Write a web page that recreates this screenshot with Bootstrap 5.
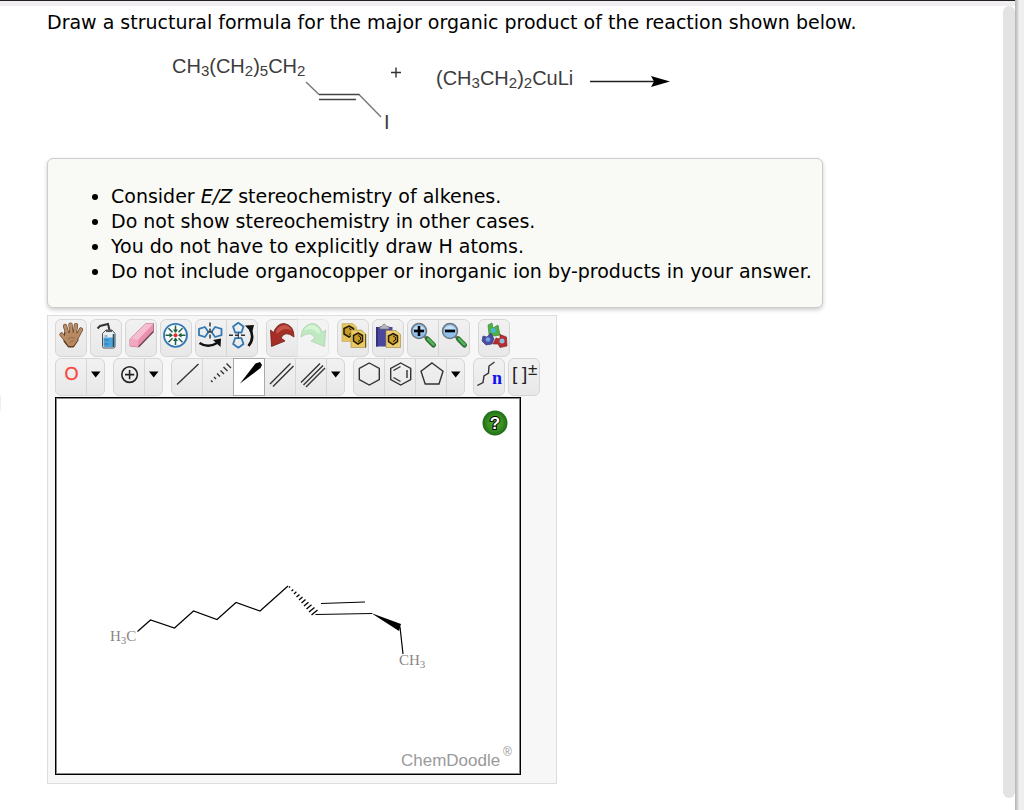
<!DOCTYPE html>
<html lang="en">
<head>
<meta charset="utf-8">
<meta name="viewport" content="width=device-width, initial-scale=1">
<title>Organic product question</title>
<link rel="stylesheet" href="https://cdn.jsdelivr.net/npm/bootstrap@5.3.0/dist/css/bootstrap.min.css">
<style>
body{font-family:"DejaVu Sans",Verdana,sans-serif;font-size:19px;line-height:25px;color:#000;background:#fff}
.top-edge{height:6px;background:#f0eef0;border-top:1px solid #231f24}
.side-handle{left:-19px;top:390px;width:20px;height:26px;border-radius:8px;background:#eee}
.content{padding:4px 16px 0 47px}
.scroll-track{width:12px;padding-bottom:12px}
.scroll-thumb{background:#e3e3e3;border-radius:6px}
.window-edge{width:9px;background:linear-gradient(90deg,#b4b4b4,#d8d8d8 3px,#efefef 4px)}
.reaction{display:block;margin-top:5px}
.notes{width:fit-content;background:#f9faf5;border:1px solid #ccc;border-radius:6px;box-shadow:0 2px 4px #0003;margin-top:18px;padding:25px 10px 23px 63px}
.notes ul{margin:0;padding:0}
.editor{width:fit-content;background:#f7f7f7;border:1px solid #ddd;margin-top:7px;padding:3px 16px 8px 7px}
.tools{gap:3px;height:39px}
.tools .gap-before{margin-left:5px}
.tool{width:32px;height:38px;padding:0;border:1px solid #d6d6d6;border-radius:6px;background:linear-gradient(#f1f1f1,#e8e8e8)}
.tool:hover,.tool:active{border-color:#ccc}
.tool svg{display:block;width:30px;height:36px}
.tool.picked{background:#fff;border-color:#aaa;z-index:1}
.tool:disabled{opacity:1;border-color:#e6e6e6;background:#f3f3f3}
.tool-drop{width:19px}
.tool-drop svg{width:17px}
.sketch{width:466px;height:378px;background:#fff;border:1px solid #000;box-shadow:inset 0 0 0 1px #888}
.sketch svg{display:block}
.help{top:12px;right:12px;width:26px;height:26px;padding:0;border:0;background:none}
.sans{font-family:"Liberation Sans",Arial,sans-serif}
.serif{font-family:"Liberation Serif","Times New Roman",serif}
.ln{fill:none;stroke:#333;stroke-width:1.4}
</style>
</head>
<body class="vh-100 overflow-hidden d-flex">
<div class="flex-grow-1 d-flex flex-column position-relative">
  <div class="top-edge"></div>
  <div class="flex-grow-1 d-flex">
    <main class="content flex-grow-1">
      <p class="mb-0">Draw a structural formula for the major organic product of the reaction shown below.</p>

      <svg class="reaction sans" width="640" height="100" viewBox="0 0 640 100" role="img" aria-label="Vinyl iodide plus lithium diethylcuprate">
        <g fill="#3c3c3c" font-size="20">
          <text x="125" y="33">CH<tspan font-size="15" dy="3">3</tspan><tspan dy="-3">(CH</tspan><tspan font-size="15" dy="3">2</tspan><tspan dy="-3">)</tspan><tspan font-size="15" dy="3">5</tspan><tspan dy="-3">CH</tspan><tspan font-size="15" dy="3">2</tspan></text>
          <text x="389" y="45">(CH<tspan font-size="15" dy="3">3</tspan><tspan dy="-3">CH</tspan><tspan font-size="15" dy="3">2</tspan><tspan dy="-3">)</tspan><tspan font-size="15" dy="3">2</tspan><tspan dy="-3">CuLi</tspan></text>
          <text x="337" y="89">I</text>
        </g>
        <path d="M344 32.500h10M349 27.500v10" stroke="#333" stroke-width="1.400"/>
        <path d="M259 42L272 54.500M312 54.500L334 77" stroke="#777" stroke-width="1.400"/>
        <path d="M272 54.500H312.500M272 59.500H309" stroke="#444" stroke-width="1.500"/>
        <path d="M543 41.500H612" stroke="#222" stroke-width="1.400"/>
        <path d="M604 36L623 41.500L604 47L607 41.500z" fill="#000"/>
      </svg>

      <section class="notes">
        <ul>
          <li>Consider <i>E/Z</i> stereochemistry of alkenes.</li>
          <li>Do not show stereochemistry in other cases.</li>
          <li>You do not have to explicitly draw H atoms.</li>
          <li>Do not include organocopper or inorganic ion by-products in your answer.</li>
        </ul>
      </section>

      <section class="editor">
        <div class="tools d-flex">
          <button class="btn tool" aria-label="Move"><svg viewBox="0 0 30 36">
            <g stroke-linecap="round" stroke-linejoin="round" fill="none">
              <path d="M9 6L12 16M14.500 4.500L15.500 15M20 5L18.500 16M25 9.500L21 17M5.500 14.500L11 21" stroke="#5d3c22" stroke-width="4.200"/>
              <path d="M9.500 13L20 13L21 20L17 26L13 26L9 21z" fill="#5d3c22" stroke="#5d3c22" stroke-width="3"/>
              <path d="M9 6L12 16M14.500 4.500L15.500 15M20 5L18.500 16M25 9.500L21 17M5.500 14.500L11 21" stroke="#b98c66" stroke-width="3"/>
              <path d="M10 14L20 14L20.500 20L17 25L13 25L10 20z" fill="#b98a62" stroke="#b98a62" stroke-width="2"/>
              <path d="M12 19Q15 16 19 18M14 23Q15 20 18 21" stroke="#8b603f" stroke-width=".8"/>
            </g></svg></button>
          <button class="btn tool" aria-label="Clear"><svg viewBox="0 0 30 36">
            <path d="M6.500 8.500L9 6L17 4L18.500 10" fill="none" stroke="#333" stroke-width="2"/>
            <path d="M15 10h6l3 3.500v13q0 1.500-1.500 1.500h-9.500q-1.500 0-1.500-1.500v-13z" fill="#e7edf0" stroke="#4c5357" stroke-width="1"/>
            <path d="M12.500 17.500h11v8.500q0 1-1 1h-9q-1 0-1-1z" fill="#4aa3dc"/>
            <path d="M15 10h6v2h-6z" fill="#555"/><path d="M13.500 16h3M13.500 20h4M13.500 24h4" stroke="#2b5f86" stroke-width=".8"/><path d="M22.500 14v13" stroke="#27485f" stroke-width="1.500"/></svg></button>
          <button class="btn tool" aria-label="Erase"><svg viewBox="0 0 30 36">
            <path d="M4 19L20 3.500L27.500 3.500L27.500 11L12 27L4 26z" fill="#e98fb0" stroke="#a65f7b" stroke-width=".8" stroke-linejoin="round"/>
            <path d="M4 19L20 3.500L27.500 3.500L12 20z" fill="#f7bdd1"/><path d="M4 19L12 20L12 27L4 26z" fill="#f3a6c0"/><path d="M12.500 27L27.500 11.500" stroke="#62404d" stroke-width="1.200"/></svg></button>
          <button class="btn tool" aria-label="Center"><svg viewBox="0 0 30 36">
            <circle cx="14.500" cy="15.300" r="11.500" fill="#f7fbfd" stroke="#3279b5" stroke-width="1.800"/>
            <path d="M14.500 5.500v6.500M14.500 25v-6.500M4.500 15.300h6.500M24.500 15.300h-6.500M7.500 8.300l4 4M21.500 8.300l-4 4M7.500 22.300l4-4M21.500 22.300l-4-4" stroke="#23603d" stroke-width="1.500"/>
            <path d="M12 9.500h5l-2.500 3.500zM12 21h5l-2.500-3.500zM8.500 12.800v5l3.500-2.500zM20.500 12.800v5l-3.500-2.500z" fill="#23603d"/>
            <circle cx="14.500" cy="15.300" r="2" fill="#e3302b"/></svg></button>
          <div class="btn-group">
            <button class="btn tool" aria-label="Flip horizontally"><svg viewBox="0 0 30 36">
              <g fill="none" stroke="#3278b4" stroke-width="1.800" stroke-linejoin="round"><path d="M12.500 12L8.900 17L3 15.200L3 8.800L8.900 7z"/><path d="M15.500 12L19.100 17L25.500 15.200L25.500 8.800L19.100 7z"/></g>
              <path d="M14 2.500v16" stroke="#333" stroke-width="1.500" stroke-dasharray="4 2"/><path d="M11 12h6" stroke="#333"/>
              <path d="M3.500 23Q12 28.500 21 23" fill="none" stroke="#111" stroke-width="2.600"/><path d="M17 20L25 18.500L24.500 27z" fill="#111"/></svg></button>
            <button class="btn tool" aria-label="Flip vertically"><svg viewBox="0 0 30 36">
              <g fill="none" stroke="#3278b4" stroke-width="1.800" stroke-linejoin="round"><path d="M11.300 2.800L16.500 6.600L14.500 12.500L8.100 12.500L6.100 6.600z"/><path d="M11.300 27.700L16.500 24L14.500 18.200L8.100 18.200L6.100 24z"/></g>
              <path d="M2 15.300h17" stroke="#333" stroke-width="1.500" stroke-dasharray="4 2"/><path d="M11.300 12.500v6" stroke="#333"/>
              <path d="M21.500 26Q28 18 23 9" fill="none" stroke="#111" stroke-width="2.600"/><path d="M18 5.500L27 5L25 13z" fill="#111"/></svg></button>
          </div>
          <div class="btn-group gap-before">
            <button class="btn tool" aria-label="Undo"><svg viewBox="0 0 30 36">
              <path d="M3.500 10L4.500 26.500L18 21L14 18Q18 10 27 17Q27 5 17 3.500Q10 3.500 6.500 12.500z" fill="#a52f26" stroke="#6d1d17" stroke-width=".8" stroke-linejoin="round"/><path d="M9 11Q12 5 18 5Q23 6 25 11Q18 6 10 14z" fill="#c5564a"/></svg></button>
            <button class="btn tool" aria-label="Redo" disabled><svg viewBox="0 0 30 36">
              <path d="M27.500 10L26.500 26.500L13 21L17 18Q13 10 3 17Q4 5 14 3.500Q21 3.500 24.500 12.500z" fill="#bfe9c0" stroke="#b3ceb4" stroke-width=".8" stroke-linejoin="round"/><path d="M22 11Q19 5 13 5Q8 6 6 11Q13 6 21 14z" fill="#d5f5d3"/></svg></button>
          </div>
          <button class="btn tool gap-before" aria-label="Copy"><svg viewBox="0 0 30 36">
            <path d="M4 3.500h11l3.500 3.500v14.500h-14.500z" fill="#e6c45a" stroke="#bba66c" stroke-width=".6"/><path d="M11 6L15.500 8.500V14L11 17L6 14V8.500z" fill="#c79b27" stroke="#221a05" stroke-width="1.500"/><path d="M11 8.500L13.500 10V13L11 14.500" fill="none" stroke="#221a05"/>
            <path d="M13 10h10.500l4 4v13.500h-14.500z" fill="#e9ca63" stroke="#a18743" stroke-width=".6"/><path d="M20 13L24.500 15.500V21L20 24L15.500 21V15.500z" fill="#c79b27" stroke="#221a05" stroke-width="1.500"/><path d="M20 15.500L22.500 17V20L20 21.500" fill="none" stroke="#221a05"/><path d="M27.700 14v13.500" stroke="#52420e"/></svg></button>
          <button class="btn tool" aria-label="Paste"><svg viewBox="0 0 30 36">
            <path d="M3 7h16.500v19.500h-16.500z" fill="#4b479f"/><path d="M3 7h2v19.500h-2z" fill="#34317c"/><path d="M7 9V6.500H9Q11 1.500 13.500 6.500H16V9z" fill="#b5b9be" stroke="#777" stroke-width=".7"/>
            <path d="M13 10.500h10l4.500 4v13h-14.500z" fill="#ebcf72" stroke="#9e8440" stroke-width=".6"/><path d="M20 13.500L24.500 16V21.500L20 24.500L15.500 21.500V16z" fill="#cfa22b" stroke="#221a05" stroke-width="1.500"/><path d="M20 16L22.500 17.500V20L20 21.500" fill="none" stroke="#221a05"/></svg></button>
          <div class="btn-group">
            <button class="btn tool" aria-label="Zoom in"><svg viewBox="0 0 30 36">
              <path d="M16 16L21 20" stroke="#777" stroke-width="3"/><path d="M19.500 19L25.500 25" stroke="#2c6b31" stroke-width="5" stroke-linecap="round"/><path d="M20 19L25.500 24.500" stroke="#55b35b" stroke-width="2.500" stroke-linecap="round"/>
              <circle cx="11" cy="11" r="7.500" fill="#8fc0ec" stroke="#6e7780" stroke-width="1.500"/><path d="M5 9Q11 2 17 9z" fill="#c9e2f7"/><path d="M6 11h10M11 6v10" stroke="#000" stroke-width="2.600"/></svg></button>
            <button class="btn tool" aria-label="Zoom out"><svg viewBox="0 0 30 36">
              <path d="M16 16L21 20" stroke="#777" stroke-width="3"/><path d="M19.500 19L25.500 25" stroke="#2c6b31" stroke-width="5" stroke-linecap="round"/><path d="M20 19L25.500 24.500" stroke="#55b35b" stroke-width="2.500" stroke-linecap="round"/>
              <circle cx="11" cy="11" r="7.500" fill="#8fc0ec" stroke="#6e7780" stroke-width="1.500"/><path d="M5 9Q11 2 17 9z" fill="#c9e2f7"/><path d="M6 11h10" stroke="#000" stroke-width="2.600"/></svg></button>
          </div>
          <button class="btn tool gap-before" aria-label="Templates"><svg viewBox="0 0 30 36">
            <path d="M9 5L13 3L14 8L19 5L21 15L16 16L10 15z" fill="#52b043" stroke="#2e7a2b" stroke-width=".6"/><path d="M4 16L8 17L12 13L15 19L13 24L7 25L3 21z" fill="#4c4ca4" stroke="#2c2c74" stroke-width=".6"/><path d="M17 18L21 19L21 14.500L27.500 17L28 26L21 27.500L19 24L14 24z" fill="#b52f2e" stroke="#761a1a" stroke-width=".6"/>
            <circle cx="14.300" cy="10.500" r="2.500" fill="#45b5d4"/><circle cx="9" cy="19.500" r="2.300" fill="#6da7e0"/><circle cx="23" cy="21" r="2.500" fill="#8ebce0"/></svg></button>
        </div>

        <div class="tools d-flex">
          <div class="btn-group">
            <button class="btn tool" aria-label="Oxygen"><svg viewBox="0 0 30 36"><text class="sans" x="15.500" y="21" text-anchor="middle" font-size="18" fill="#f8453c" stroke="#f8453c" stroke-width=".3">O</text></svg></button>
            <button class="btn tool tool-drop" aria-label="More elements"><svg viewBox="0 0 17 36"><path d="M4 12.500h9.500L8.700 18.500z"/></svg></button>
          </div>
          <div class="btn-group gap-before">
            <button class="btn tool" aria-label="Increase charge"><svg viewBox="0 0 30 36"><g fill="none" stroke="#222" stroke-width="1.600"><circle cx="15.600" cy="15.600" r="7.800"/><path d="M11 15.600h9.200M15.600 11v9.200"/></g></svg></button>
            <button class="btn tool tool-drop" aria-label="More attributes"><svg viewBox="0 0 17 36"><path d="M4 12.500h9.500L8.700 18.500z"/></svg></button>
          </div>
          <div class="btn-group gap-before">
            <button class="btn tool" aria-label="Single bond"><svg viewBox="0 0 30 36"><path class="ln" d="M5 25.500L26.500 5"/></svg></button>
            <button class="btn tool" aria-label="Recessed bond"><svg viewBox="0 0 30 36"><path class="ln" d="M8 21.500l1.500 1.500M11 18l2 2M14 14.500l3 3M17.500 11.500l3.500 3.500M20.500 8l4 4M23.500 4.500l4.500 4.500"/></svg></button>
            <button class="btn tool picked" aria-label="Protruding bond"><svg viewBox="0 0 30 36"><path d="M6 24.500L21.500 4.500L26 3L28 6L26.500 9z"/></svg></button>
            <button class="btn tool" aria-label="Double bond"><svg viewBox="0 0 30 36"><path class="ln" d="M5 25L25.500 4.500M8 27.500L28.500 7"/></svg></button>
            <button class="btn tool" aria-label="Triple bond"><svg viewBox="0 0 30 36"><path class="ln" d="M5 23.500L24 4.500M7.500 26L27 6.500M10 28L29 9"/></svg></button>
            <button class="btn tool tool-drop" aria-label="More bonds"><svg viewBox="0 0 17 36"><path d="M4 12.500h9.500L8.700 18.500z"/></svg></button>
          </div>
          <div class="btn-group gap-before">
            <button class="btn tool" aria-label="Cyclohexane ring"><svg viewBox="0 0 30 36"><path class="ln" d="M15.300 4L25.300 9.500V20.500L15.300 26L5.300 20.500V9.500z"/></svg></button>
            <button class="btn tool" aria-label="Benzene ring"><svg viewBox="0 0 30 36"><path class="ln" d="M15.700 4L25.700 9.500V20.500L15.700 26L5.700 20.500V9.500zM8.500 11.500L15.500 7.500M22 11V19M8.500 18.500L15.500 22.500"/></svg></button>
            <button class="btn tool" aria-label="Cyclopentane ring"><svg viewBox="0 0 30 36"><path class="ln" d="M16 4L27 12.300L23 25H9.200L5 12.300z"/></svg></button>
            <button class="btn tool tool-drop" aria-label="More rings"><svg viewBox="0 0 17 36"><path d="M4 12.500h9.500L8.700 18.500z"/></svg></button>
          </div>
          <button class="btn tool gap-before" aria-label="Chain"><svg viewBox="0 0 30 36"><path class="ln" stroke-width="1.800" d="M3.300 26.500L9 23.500L10 17L14.500 14L15 7L20.500 3"/><text class="serif" x="18" y="25" font-size="18" font-weight="700" fill="#1010f0">n</text></svg></button>
          <button class="btn tool" aria-label="Repeat unit"><svg viewBox="0 0 30 36"><g class="sans" fill="#222"><text x="3" y="21" font-size="19">[</text><text x="13" y="21" font-size="19">]</text><text x="19" y="16" font-size="17">±</text></g></svg></button>
        </div>

        <div class="sketch position-relative">
          <svg width="464" height="376" viewBox="0 0 464 376" role="img" aria-label="Drawn molecule">
            <g fill="none" stroke="#000" stroke-width="1.200">
              <path d="M81.500 233.500L94.500 222L118.500 230L137.500 213L161 221.500L180 204.500L204 213L232 188"/>
              <path d="M259.500 216.500L316 215.500M265 205.500L309 204M344 229L347 256"/>
              <path stroke-width="1.300" d="M233 189.500l1-1M235.500 193l1.800-1.600M238 196l2.400-2.200M240.500 199l3-2.600M243 202l3.500-3M245.500 205l4-3.400M248 208l4.500-3.800M250.500 211l5-4.200M253 214l5.500-4.600M255.500 217l6-5"/>
            </g>
            <path d="M315 215L345 226L343 233z"/>
            <g class="serif" fill="#8a8585" font-size="15">
              <text x="54" y="243">H<tspan font-size="11" dy="3">3</tspan><tspan dy="-3">C</tspan></text>
              <text x="343" y="267">CH<tspan font-size="11" dy="3">3</tspan></text>
            </g>
            <g class="sans" fill="#9a9a9a">
              <text x="345" y="368" font-size="17">ChemDoodle</text>
              <text x="447" y="358" font-size="12">®</text>
            </g>
          </svg>
          <button class="btn help position-absolute" aria-label="Help"><svg width="26" height="26" viewBox="0 0 26 26">
            <defs><radialGradient id="leaf"><stop offset="0" stop-color="#4fae25"/><stop offset=".6" stop-color="#37901e"/><stop offset="1" stop-color="#1f6a1c"/></radialGradient></defs>
            <circle cx="13" cy="13" r="12.500" fill="url(#leaf)"/>
            <text class="sans" x="13" y="19" text-anchor="middle" font-size="17" font-weight="700" fill="#fff" stroke="#000" stroke-width="2" paint-order="stroke">?</text></svg></button>
        </div>
      </section>
    </main>
    <div class="scroll-track d-flex"><div class="scroll-thumb flex-grow-1"></div></div>
  </div>
  <div class="side-handle position-absolute"></div>
</div>
<div class="window-edge flex-shrink-0"></div>
<script src="https://cdn.jsdelivr.net/npm/bootstrap@5.3.0/dist/js/bootstrap.bundle.min.js"></script>
</body>
</html>
